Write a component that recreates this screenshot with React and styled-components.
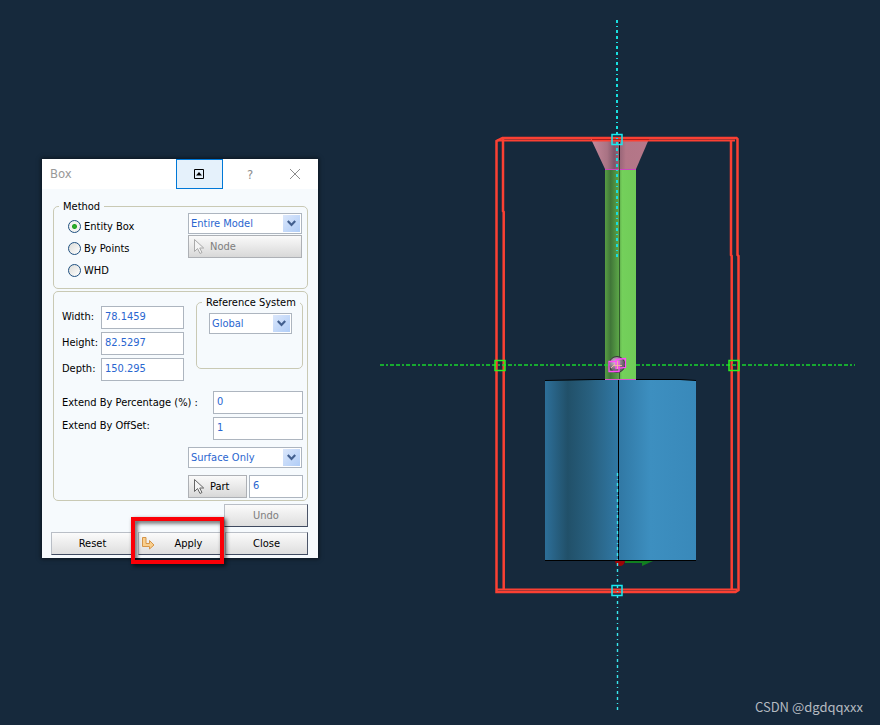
import React, { useState } from 'react';
import styled, { createGlobalStyle, css } from 'styled-components';

const GlobalStyle = createGlobalStyle`
* {
    box-sizing: border-box;
}
body {
    margin: 0;
    background-color: #16293c;
    font-family: "DejaVu Sans Condensed", Tahoma, "DejaVu Sans", sans-serif;
    font-size: 11px;
    color: #000;
}
button, input, select {
    font: inherit;
}
`

const Page = styled.main`
position: relative;
display: grid;
grid-template-columns: 370px minmax(0, 1fr);
align-items: start;
min-height: 100vh;
`

const Dialog = styled.section`
position: relative;
margin: 159px 52px 0 42px;
background-color: #f6fafd;
box-shadow: 0 0 4px 1px rgba(0,0,0,0.5);
`

const TitleBar = styled.header`
display: grid;
grid-template-columns: 1fr 47px 54px 36px;
height: 30px;
padding-right: 5px;
background-color: #fff;
`

const Title = styled.h1`
margin: 0;
padding-left: 8px;
font-size: 13px;
font-weight: 400;
line-height: 30px;
color: #999;
`

const TitleButton = styled.button`
display: flex;
align-items: center;
justify-content: center;
padding: 0;
border: 1px solid transparent;
background: none;
font-size: 13px;
color: #8c8c8c;
${props=>
    props.$active &&
    css`
        padding-right: 2px;
        border-color: #0078d7;
        background-color: #e5f1fb;
    `
}
`

const Body = styled.form`
padding: 11px 10px 3px 9px;
`

const Group = styled.fieldset`
min-width: 0;
margin: 0 0 0 2px;
padding: 0;
border: 1px solid #c9c9b4;
border-radius: 5px;
`

const Legend = styled.legend`
margin-left: 5px;
padding: 1px 4px 0;
line-height: 12px;
white-space: nowrap;
`

const MethodLayout = styled.div`
display: grid;
grid-template-columns: 1fr 114px;
padding: 0 5px 7px 14px;
`

const RadioList = styled.div`
padding-top: 2px;
`

const RadioLabel = styled.label`
display: flex;
align-items: center;
gap: 3px;
height: 22px;
`

const Radio = styled.input`
appearance: none;
width: 13px;
height: 13px;
margin: 0;
border: 1px solid #1f5080;
border-radius: 50%;
background: linear-gradient(135deg, #dcdcd8, #fff);
&:checked{
    background: radial-gradient(circle, #2fb52f 0, #21a121 2px, #f3f3f0 3px);
}
`

const Stack = styled.div`
display: flex;
flex-direction: column;
gap: ${props=> props.$gap}px;
`

const SelectBox = styled.div`
display: flex;
width: ${props=> props.$width}px;
height: 21px;
padding: 1px;
border: 1px solid #adb5bf;
background-color: #fff;
`

const SelectInput = styled.select`
appearance: none;
flex: 1;
min-width: 0;
padding: 0 0 0 1px;
border: 0;
background: none;
color: #2a66d0;
`

const SelectArrow = styled.span`
display: flex;
align-items: center;
justify-content: center;
width: 17px;
background: linear-gradient(135deg, #dbe7fb, #b0cdf7);
pointer-events: none;
`

const PickButton = styled.button`
display: flex;
align-items: center;
gap: 5px;
height: 23px;
width: ${props=> props.$width}px;
padding: 0 0 0 4px;
border: 1px solid #adb0b5;
background: linear-gradient(#fafafa, #d8d8d8);
color: #000;
&:disabled{
    color: #7d7d7d;
}
`

const Panel = styled.div`
margin: 2px 0 0 2px;
padding: 0 4px 2px 8px;
border: 1px solid #c9c9b4;
border-radius: 5px;
`

const Columns = styled.div`
display: flex;
justify-content: space-between;
`

const Dimensions = styled.div`
display: grid;
grid-template-columns: 39px 83px;
gap: 3px 0;
padding-top: 14px;
line-height: 22px;
`

const Reference = styled(Group)`
width: 107px;
height: 73px;
margin: 4px 0 0 0;
`

const ReferenceBody = styled.div`
padding: 4px 0 0 12px;
`

const TextField = styled.input`
width: ${props=> props.$width}px;
height: 23px;
padding: 0 4px 2px 3px;
border: 1px solid #adb5bf;
background-color: #fff;
color: #2a66d0;
`

const Extend = styled(Columns)`
margin-top: 10px;
line-height: 23px;
`

const Target = styled.div`
display: grid;
gap: 7px;
justify-content: end;
margin-top: 7px;
`

const TargetRow = styled.div`
display: flex;
gap: 2px;
`

const ActionButton = styled.button`
position: relative;
height: 23px;
padding: ${props=> props.$icon ? '0 0 0 18px' : '0'};
border: 1px solid #b9bec6;
border-right-color: #4c5568;
border-bottom-color: #3f4a60;
background: linear-gradient(#fbfbfb, #dedede);
color: #000;
&:disabled{
    color: #7d7d7d;
}
svg {
    position: absolute;
    left: 2px;
    top: 3px;
}
`

const UndoRow = styled.div`
display: grid;
grid-template-columns: 84px;
justify-content: end;
margin-top: 3px;
`

const Actions = styled.div`
display: grid;
grid-template-columns: repeat(3, 1fr);
gap: 4px;
margin-top: 5px;
`

const Highlight = styled.div`
position: absolute;
right: 94px;
bottom: -6px;
width: 93px;
height: 47px;
border: 4px solid #fb0007;
filter: drop-shadow(2px 2px 2px rgba(0,0,0,0.7));
pointer-events: none;
`

const Scene = styled.svg`
display: block;
width: 100%;
height: auto;
`

const Credit = styled.footer`
position: absolute;
right: 17px;
bottom: 9px;
font-family: "Noto Sans CJK SC", "Liberation Sans", sans-serif;
font-size: 13px;
line-height: 18px;
color: #b4bac0;
`

const CursorIcon = ({ faded }) => (
    <svg width="12" height="17" viewBox="0 0 12 17">
        <path d="M1.5 1.5v12l3-3 2.5 5 2-1-2.3-4.5h4z" fill="#f4f4f4" stroke={faded ? '#aaa' : '#666'} />
    </svg>
);

const Select = ({ width, label, children }) => (
    <SelectBox $width={width}>
        <SelectInput aria-label={label}>{children}</SelectInput>
        <SelectArrow>
            <svg width="9" height="7" viewBox="0 0 9 7">
                <path d="M.8 1l3.7 4 3.7-4" fill="none" stroke="#43608f" strokeWidth="2.2" />
            </svg>
        </SelectArrow>
    </SelectBox>
);

const Model = () => (
    <Scene viewBox="370 0 510 725" role="img" aria-label="Model view">
        <defs>
            <linearGradient id="blue">
                <stop offset="0" stopColor="#2d6f99" />
                <stop offset="0.15" stopColor="#215069" />
                <stop offset="0.3" stopColor="#28607f" />
                <stop offset="0.48" stopColor="#3077a3" />
                <stop offset="0.7" stopColor="#3d8fc0" />
                <stop offset="1" stopColor="#3989ba" />
            </linearGradient>
            <linearGradient id="green">
                <stop offset="0" stopColor="#579d43" />
                <stop offset="0.18" stopColor="#407638" />
                <stop offset="0.45" stopColor="#5ca648" />
                <stop offset="0.55" stopColor="#74d05b" />
                <stop offset="1" stopColor="#70cc58" />
            </linearGradient>
            <linearGradient id="pink">
                <stop offset="0" stopColor="#c6899b" />
                <stop offset="0.28" stopColor="#a97384" />
                <stop offset="0.4" stopColor="#80566a" />
                <stop offset="0.6" stopColor="#b37687" />
                <stop offset="1" stopColor="#b57789" />
            </linearGradient>
            <radialGradient id="ball" cx="0.4" cy="0.35">
                <stop offset="0" stopColor="#d8c8d8" />
                <stop offset="1" stopColor="#6c626c" />
            </radialGradient>
        </defs>

        <path d="M591 139h58l-13 30h-31z" fill="url(#pink)" />
        <path d="M605 169h31v211h-31z" fill="url(#green)" />
        <path d="M605 169.5h31" stroke="#c844c0" />
        <path d="M619.5 142v18" stroke="#111" />
        <path d="M619.5 160v220" stroke="#315b2b" />
        <path d="M545 380h151v180h-151z" fill="url(#blue)" />
        <path d="M545 380.5l50-1h85l16 1M545 560.5h151M618.5 380v180" fill="none" stroke="#000" />
        <path d="M605 379.5h31" stroke="#d556cc" />

        <path d="M615 561h10q-1 5-5 5t-5-5z" fill="#9c0507" />
        <path d="M625 561h28l-11 5v-3h-17z" fill="#118020" />

        <g fill="none" stroke="#fb4033" strokeWidth="2.5">
            <path d="M496.5 591V141l6-3h234l1 1v116l1 1v334l-3 2H496.500z" />
            <path d="M503 139v72l.7 1v378M731 140v115l.7 1v334" />
            <path d="M497 140.500h238M497 589.500h240" strokeWidth="2" />
        </g>
        <path d="M592 139.5h57" stroke="#a71d1d" />

        <path d="M617 20v237" stroke="#18dfe0" strokeWidth="2" strokeDasharray="3 3 3 3 1 3" strokeDashoffset="6" />
        <path d="M617.5 473v237" stroke="#38e8f0" strokeWidth="1.4" strokeDasharray="3 3 1 3 3 3" />
        <path d="M380 365h229M636 365h219" stroke="#18d52c" strokeWidth="1.5" strokeDasharray="4 2 2 2 4 2" />

        <g fill="none" strokeWidth="1.5">
            <path d="M612 134.5h10v10h-10zM612 585.5h10v10h-10z" stroke="#18eaf0" />
            <path d="M495 360.5h10v10h-10zM729 360.5h10v10h-10z" stroke="#2ef01e" />
        </g>

        <circle cx="617" cy="364.5" r="8" fill="url(#ball)" stroke="#383438" />
        <path d="M609 361.500h10v10h-10zM616 359.500l9.500-1v9l-9.500 1z" fill="none" stroke="#ff4df8" strokeWidth="1.3" />
        <path d="M611 368l4-4M617.5 361v8M614 365.500h8" stroke="#f0b0a0" />
    </Scene>
);

const App = () => {
    const [ method, setMethod ] = useState('Entity Box');

    return (
        <>
            <GlobalStyle />
            <Page>
                <Dialog aria-label="Box">
                    <TitleBar>
                        <Title>Box</Title>
                        <TitleButton type="button" $active aria-label="Collapse">
                            <svg width="12" height="12" viewBox="0 0 12 12">
                                <path d="M1.5 1.500h9v9h-9z" fill="none" stroke="#000" />
                                <path d="M6 4l3 3.500H3z" />
                            </svg>
                        </TitleButton>
                        <TitleButton type="button" aria-label="Help">?</TitleButton>
                        <TitleButton type="button" aria-label="Close window">
                            <svg width="12" height="12" viewBox="0 0 12 12">
                                <path d="M1 1l10 10M11 1L1 11" stroke="#8c8c8c" />
                            </svg>
                        </TitleButton>
                    </TitleBar>
                    <Body onSubmit={e => e.preventDefault()}>
                        <Group>
                            <Legend>Method</Legend>
                            <MethodLayout>
                                <RadioList>
                                    {['Entity Box', 'By Points', 'WHD'].map(name => (
                                        <RadioLabel key={name}>
                                            <Radio type="radio" name="method" checked={method === name} onChange={() => setMethod(name)} />
                                            {name}
                                        </RadioLabel>
                                    ))}
                                </RadioList>
                                <Stack $gap={1}>
                                    <Select width={114} label="Entity"><option>Entire Model</option></Select>
                                    <PickButton type="button" $width={114} disabled><CursorIcon faded />Node</PickButton>
                                </Stack>
                            </MethodLayout>
                        </Group>
                        <Panel>
                            <Columns>
                                <Dimensions>
                                    <label htmlFor="width">Width:</label>
                                    <TextField id="width" $width={83} defaultValue="78.1459" />
                                    <label htmlFor="height">Height:</label>
                                    <TextField id="height" $width={83} defaultValue="82.5297" />
                                    <label htmlFor="depth">Depth:</label>
                                    <TextField id="depth" $width={83} defaultValue="150.295" />
                                </Dimensions>
                                <Reference>
                                    <Legend>Reference System</Legend>
                                    <ReferenceBody>
                                        <Select width={83} label="Reference System"><option>Global</option></Select>
                                    </ReferenceBody>
                                </Reference>
                            </Columns>
                            <Extend>
                                <Stack $gap={0}>
                                    <label htmlFor="percentage">Extend By Percentage (%) :</label>
                                    <label htmlFor="offset">Extend By OffSet:</label>
                                </Stack>
                                <Stack $gap={3}>
                                    <TextField id="percentage" $width={90} defaultValue="0" />
                                    <TextField id="offset" $width={90} defaultValue="1" />
                                </Stack>
                            </Extend>
                            <Target>
                                <Select width={114} label="Surface"><option>Surface Only</option></Select>
                                <TargetRow>
                                    <PickButton type="button" $width={59}><CursorIcon />Part</PickButton>
                                    <TextField $width={54} aria-label="Part" defaultValue="6" />
                                </TargetRow>
                            </Target>
                        </Panel>
                        <UndoRow>
                            <ActionButton type="button" disabled>Undo</ActionButton>
                        </UndoRow>
                        <Actions>
                            <ActionButton type="reset">Reset</ActionButton>
                            <ActionButton type="submit" $icon>
                                <svg width="14" height="14" viewBox="0 0 14 14">
                                    <path d="M1.5 1.500h3.500v6h3.500v-3l4.500 4.500-4.500 4v-2.500h-7z" fill="#f9cf8d" stroke="#d59548" />
                                </svg>
                                Apply
                            </ActionButton>
                            <ActionButton type="button">Close</ActionButton>
                        </Actions>
                    </Body>
                    <Highlight />
                </Dialog>
                <Model />
                <Credit>CSDN @dgdqqxxx</Credit>
            </Page>
        </>
    );
};

export default App;
